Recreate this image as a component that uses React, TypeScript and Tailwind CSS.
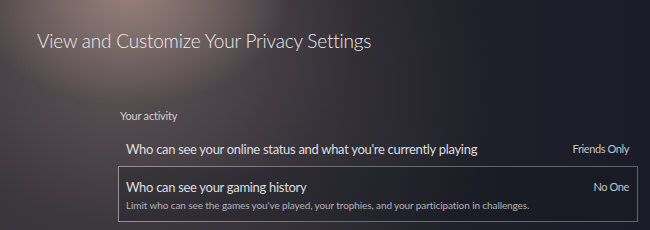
import React from 'react';

type Setting = {
  label: string;
  value: string;
  description?: string;
  focused?: boolean;
};

const settings: Setting[] = [
  {
    label: "Who can see your online status and what you're currently playing",
    value: 'Friends Only',
  },
  {
    label: 'Who can see your gaming history',
    value: 'No One',
    description:
      "Limit who can see the games you've played, your trophies, and your participation in challenges.",
    focused: true,
  },
];

const SettingRow: React.FC<{ setting: Setting }> = ({ setting }) => (
  <div
    className={`flex flex-col pl-[7px] pr-[8px] ${
      setting.focused
        ? 'h-[56px] border [border-image:linear-gradient(90deg,#a08e94,#6d6b78_40%,#5e6272)_1] bg-[#15161e]/30 pt-[11px]'
        : 'h-[30px] justify-center border border-transparent'
    }`}
  >
    <div className="flex items-center justify-between">
      <span className="text-[13px] leading-[18px] tracking-[-0.3px] text-[#dedee2]">{setting.label}</span>
      <span className="text-[11px] leading-[14px] tracking-[-0.4px] text-[#c4c4c9]">{setting.value}</span>
    </div>
    {setting.description && (
      <p className="mt-[3px] text-[10px] leading-[13px] tracking-[-0.1px] text-[#b2b2b8]">{setting.description}</p>
    )}
  </div>
);

export default function App() {
  return (
    <div
      className="h-[230px] w-[650px] overflow-hidden bg-[radial-gradient(ellipse_160px_110px_at_130px_-5px,rgba(165,140,132,0.8),transparent),radial-gradient(ellipse_230px_200px_at_130px_20px,rgba(120,104,102,0.45),transparent),radial-gradient(ellipse_380px_340px_at_110px_90px,#4b4448_0%,#3a363c_45%,transparent_100%),linear-gradient(90deg,#302e36,#22222b_55%,#1a1c27)] font-['Lato','Liberation_Sans',sans-serif]"
    >
      <h1 className="pl-[37px] pt-[29px] text-[19px] font-light leading-[24px] tracking-[-0.2px] text-[#ececee]">
        View and Customize Your Privacy Settings
      </h1>
      <div className="ml-[118px] mr-[12px] mt-[56px]">
        <div className="pl-[2px] text-[11px] leading-[14px] tracking-[-0.2px] text-[#d2d2d6]">Your activity</div>
        <div className="mt-[11px] flex flex-col gap-[2px]">
          {settings.map((s) => (
            <SettingRow key={s.label} setting={s} />
          ))}
        </div>
      </div>
    </div>
  );
}
